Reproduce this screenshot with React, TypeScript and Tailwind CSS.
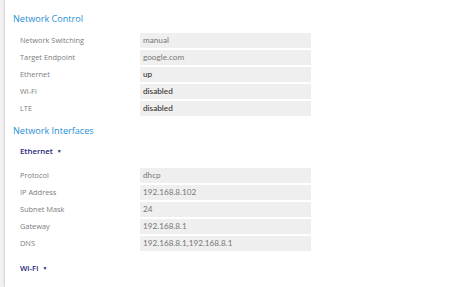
import React from "react";

type Row = { label: string; value: string; strong?: boolean };

const control: Row[] = [
  { label: "Network Switching", value: "manual" },
  { label: "Target Endpoint", value: "google.com" },
  { label: "Ethernet", value: "up", strong: true },
  { label: "Wi-Fi", value: "disabled", strong: true },
  { label: "LTE", value: "disabled", strong: true },
];

const eth: Row[] = [
  { label: "Protocol", value: "dhcp" },
  { label: "IP Address", value: "192.168.8.102" },
  { label: "Subnet Mask", value: "24" },
  { label: "Gateway", value: "192.168.8.1" },
  { label: "DNS", value: "192.168.8.1,192.168.8.1" },
];

function Rows({ rows }: { rows: Row[] }) {
  return (
    <div className="flex flex-col gap-[2px] pl-[7px]">
      {rows.map((r) => (
        <div key={r.label} className="flex items-center h-[15px]">
          <div className="w-[120px] text-[7.4px] leading-[15px] text-[#7c7c7c] font-['Open_Sans',sans-serif]">
            {r.label}
          </div>
          <div
            className={
              "w-[171px] h-[15px] bg-[#efefef] pl-[3px] text-[8.2px] leading-[15px] font-['Lato',sans-serif] " +
              (r.strong ? "text-[#333] font-medium" : "text-[#777]")
            }
          >
            {r.value}
          </div>
        </div>
      ))}
    </div>
  );
}

function Sub({ title }: { title: string }) {
  return (
    <div className="flex items-center h-[14px] pl-[7px] gap-[4px] text-[7.8px] font-semibold text-[#1f237a] font-['Open_Sans',sans-serif]">
      <span>{title}</span>
      <span className="text-[5px]">▼</span>
    </div>
  );
}

export default function App() {
  return (
    <div className="w-full h-[287px] bg-[#f2f2f2] flex overflow-hidden">
      <div className="ml-[5px] flex-1 bg-white shadow-[-1px_0_2px_rgba(0,0,0,0.12)] pl-[8px] pt-[12px]">
        <div className="h-[14px] leading-[14px] text-[9.1px] text-[#1e8fd6] font-['Open_Sans',sans-serif]">
          Network Control
        </div>
        <div className="mt-[7px]">
          <Rows rows={control} />
        </div>
        <div className="mt-[8px] h-[14px] leading-[14px] text-[9.1px] text-[#1e8fd6] font-['Open_Sans',sans-serif]">
          Network Interfaces
        </div>
        <div className="mt-[7px]">
          <Sub title="Ethernet" />
        </div>
        <div className="mt-[9px]">
          <Rows rows={eth} />
        </div>
        <div className="mt-[11px]">
          <Sub title="Wi-Fi" />
        </div>
      </div>
    </div>
  );
}
